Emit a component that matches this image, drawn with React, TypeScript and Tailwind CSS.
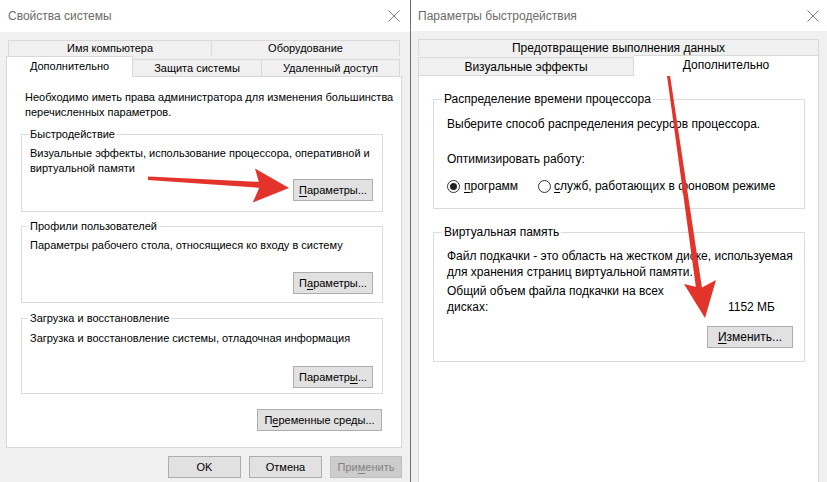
import React from "react";

const XIcon = () => (
  <svg width="12" height="12" viewBox="0 0 12 12" className="block">
    <path d="M0.5 0.5 L11.5 11.5 M11.5 0.5 L0.5 11.5" stroke="#7a7a7a" strokeWidth="1" fill="none" />
  </svg>
);

const Btn = ({ children, w, disabled, size }: { children: React.ReactNode; w: string; disabled?: boolean; size: string }) => (
  <div
    className={`${w} ${size} h-[22px] flex items-center justify-center leading-none whitespace-nowrap border ${
      disabled ? "bg-[#cccccc] border-[#bfbfbf] text-[#838383]" : "bg-[#e1e1e1] border-[#adadad] text-black"
    }`}
  >
    {children}
  </div>
);

const U = ({ children }: { children: React.ReactNode }) => <span className="underline underline-offset-2">{children}</span>;

const Legend = ({ children, left, size }: { children: React.ReactNode; left: string; size: string }) => (
  <span className={`absolute -top-[8px] ${left} ${size} bg-white px-[2px] leading-[15px] text-black whitespace-nowrap`}>{children}</span>
);

function LeftWindow() {
  return (
    <div className="w-[411px] h-full flex flex-col border-r border-[#707070] bg-[#f0f0f0] shrink-0">
      <div className="h-[32px] bg-white flex items-center justify-between pl-[8px] pr-[10px] shrink-0">
        <span className="text-[12px] text-[#6b6b6b]">Свойства системы</span>
        <XIcon />
      </div>
      <div className="flex-1 pl-[6px] pt-[8px]">
        <div className="ml-[2px] flex w-[392px] h-[16px]">
          <div className="w-[204px] border border-b-0 border-[#d9d9d9] bg-[#f0f0f0] flex items-center justify-center text-[11px] leading-none">
            Имя компьютера
          </div>
          <div className="w-[188px] border border-l-0 border-b-0 border-[#d9d9d9] bg-[#f0f0f0] flex items-center justify-center text-[11px] leading-none">
            Оборудование
          </div>
        </div>
        <div className="flex h-[21px] items-end -mb-px relative z-10">
          <div className="w-[127px] h-[21px] bg-white border border-b-0 border-[#d9d9d9] flex items-center justify-center text-[11px] leading-none pb-[2px]">
            Дополнительно
          </div>
          <div className="w-[129px] h-[17px] mb-px bg-[#f0f0f0] border border-l-0 border-b-0 border-[#d9d9d9] flex items-center justify-center text-[11px] leading-none">
            Защита системы
          </div>
          <div className="w-[138px] h-[17px] mb-px bg-[#f0f0f0] border border-l-0 border-b-0 border-[#d9d9d9] flex items-center justify-center text-[11px] leading-none">
            Удаленный доступ
          </div>
        </div>
        <div className="w-[396px] h-[372px] bg-white border border-[#d9d9d9] flex flex-col text-[11px] leading-[15px] text-black whitespace-nowrap">
          <p className="pl-[18px] pt-[13px]">
            Необходимо иметь права администратора для изменения большинства
            <br />
            перечисленных параметров.
          </p>
          <div className="ml-[14px] mt-[14px] w-[362px] h-[78px] border border-[#dcdcdc] relative pt-[11px] pl-[8px]">
            <Legend left="left-[6px]" size="text-[11px]">Быстродействие</Legend>
            <p>
              Визуальные эффекты, использование процессора, оперативной и
              <br />
              виртуальной памяти
            </p>
            <div className="flex justify-end pr-[9px] mt-[3px]">
              <Btn w="w-[80px]" size="text-[11px]">
                <U>П</U>араметры...
              </Btn>
            </div>
          </div>
          <div className="ml-[14px] mt-[14px] w-[362px] h-[77px] border border-[#dcdcdc] relative pt-[11px] pl-[8px]">
            <Legend left="left-[6px]" size="text-[11px]">Профили пользователей</Legend>
            <p>Параметры рабочего стола, относящиеся ко входу в систему</p>
            <div className="flex justify-end pr-[9px] mt-[19px]">
              <Btn w="w-[80px]" size="text-[11px]">
                П<U>а</U>раметры...
              </Btn>
            </div>
          </div>
          <div className="ml-[14px] mt-[15px] w-[362px] h-[76px] border border-[#dcdcdc] relative pt-[12px] pl-[8px]">
            <Legend left="left-[6px]" size="text-[11px]">Загрузка и восстановление</Legend>
            <p>Загрузка и восстановление системы, отладочная информация</p>
            <div className="flex justify-end pr-[9px] mt-[20px]">
              <Btn w="w-[80px]" size="text-[11px]">
                Параметр<U>ы</U>...
              </Btn>
            </div>
          </div>
          <div className="flex justify-end pr-[19px] mt-[15px]">
            <Btn w="w-[125px]" size="text-[11px]">
              П<U>е</U>ременные среды...
            </Btn>
          </div>
        </div>
        <div className="w-[396px] flex justify-end gap-[8px] mt-[8px]">
          <Btn w="w-[73px]" size="text-[11px]">OK</Btn>
          <Btn w="w-[73px]" size="text-[11px]">Отмена</Btn>
          <Btn w="w-[72px]" size="text-[11px]" disabled>
            При<U>м</U>енить
          </Btn>
        </div>
      </div>
    </div>
  );
}

const Radio = ({ checked }: { checked?: boolean }) => (
  <span className="w-[13px] h-[13px] rounded-full border border-[#333333] bg-white flex items-center justify-center shrink-0">
    {checked && <span className="w-[7px] h-[7px] rounded-full bg-[#222222]" />}
  </span>
);

function RightWindow() {
  return (
    <div className="flex-1 h-full flex flex-col bg-[#f0f0f0]">
      <div className="h-[31px] bg-white flex items-center justify-between pl-[7px] pr-[8px] shrink-0">
        <span className="text-[12px] text-[#6b6b6b]">Параметры быстродействия</span>
        <XIcon />
      </div>
      <div className="flex-1 pl-[7px] pt-[8px]">
        <div className="flex w-[401px] h-[16px]">
          <div className="w-[401px] border border-b-0 border-[#d9d9d9] bg-[#f0f0f0] flex items-center justify-center text-[12px] leading-none">
            Предотвращение выполнения данных
          </div>
        </div>
        <div className="flex h-[21px] items-end -mb-px relative z-10">
          <div className="w-[216px] h-[18px] mb-px bg-[#f0f0f0] border border-b-0 border-[#d9d9d9] flex items-center justify-center text-[12px] leading-none">
            Визуальные эффекты
          </div>
          <div className="w-[185px] h-[21px] bg-white border border-l-0 border-b-0 border-[#d9d9d9] flex items-center justify-center text-[12px] leading-none pb-[2px]">
            Дополнительно
          </div>
        </div>
        <div className="w-[401px] h-[420px] bg-white border border-[#d9d9d9] flex flex-col text-[12px] leading-[16px] text-black whitespace-nowrap">
          <div className="ml-[14px] mt-[23px] w-[372px] h-[110px] border border-[#dcdcdc] relative pt-[16px] pl-[13px]">
            <Legend left="left-[8px]" size="text-[12px]">Распределение времени процессора</Legend>
            <p>Выберите способ распределения ресурсов процессора.</p>
            <p className="mt-[19px]">Оптимизировать работу:</p>
            <div className="flex items-center mt-[11px] h-[16px]">
              <Radio checked />
              <span className="ml-[4px]">
                <U>п</U>рограмм
              </span>
              <span className="ml-[20px]">
                <Radio />
              </span>
              <span className="ml-[3px]">
                <U>с</U>лужб, работающих в фоновом режиме
              </span>
            </div>
          </div>
          <div className="ml-[14px] mt-[23px] w-[372px] h-[130px] border border-[#dcdcdc] relative pt-[15px] pl-[13px]">
            <Legend left="left-[8px]" size="text-[12px]">Виртуальная память</Legend>
            <p>
              Файл подкачки - это область на жестком диске, используемая
              <br />
              для хранения страниц виртуальной памяти.
            </p>
            <div className="flex justify-between items-end mt-[3px] pr-[29px]">
              <p>
                Общий объем файла подкачки на всех
                <br />
                дисках:
              </p>
              <span>1152 МБ</span>
            </div>
            <div className="flex justify-end pr-[11px] mt-[11px]">
              <Btn w="w-[86px]" size="text-[12px]">
                <U>И</U>зменить...
              </Btn>
            </div>
          </div>
        </div>
      </div>
    </div>
  );
}

function Arrows() {
  return (
    <svg className="absolute inset-0 pointer-events-none" width="827" height="482" viewBox="0 0 827 482">
      <polygon points="148,176.5 148,180 262,188 262,182" fill="#e3342b" />
      <polygon points="289,188 255,168.6 260,186 252.8,202.5" fill="#e3342b" />
      <polygon points="666.5,72 669.5,72 702,288 696,288" fill="#e3342b" />
      <polygon points="705,318 684,284 701,288 716,280" fill="#e3342b" />
    </svg>
  );
}

export default function App() {
  return (
    <div className="w-[827px] h-[482px] overflow-hidden relative flex font-['Liberation_Sans',Arial,sans-serif] bg-white">
      <LeftWindow />
      <RightWindow />
      <Arrows />
    </div>
  );
}
